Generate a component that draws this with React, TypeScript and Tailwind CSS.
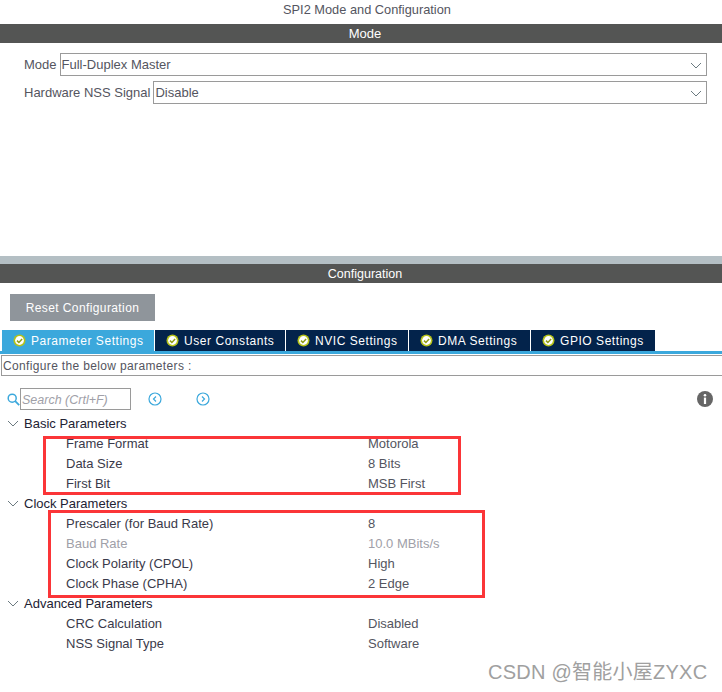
const font = "font-['Liberation_Sans',Arial,sans-serif]";

function Check() {
  return (
    <svg width="13" height="13" viewBox="0 0 13 13" className="shrink-0">
      <circle cx="6.5" cy="6.5" r="6" fill="#b5c21a" />
      <circle cx="6.5" cy="6.5" r="4.4" fill="#ffffff" />
      <path d="M4 6.6l1.9 1.9 3.2-3.4" fill="none" stroke="#8f9c10" strokeWidth="1.5" />
    </svg>
  );
}

function Chevron({ className }: { className: string }) {
  return (
    <svg width="12" height="7" viewBox="0 0 12 7" className={className}>
      <path d="M1 1l5 5 5-5" fill="none" stroke="#6b7a80" strokeWidth="1" />
    </svg>
  );
}

function SelectBox({ value }: { value: string }) {
  return (
    <div className="flex-1 h-[23px] border border-[#9a9a9a] flex items-center justify-between pl-[1px] pr-[4px] text-[#545560]">
      <span>{value}</span>
      <Chevron className="mt-[1px]" />
    </div>
  );
}

function Tab({ label, active, width }: { label: string; active?: boolean; width: string }) {
  return (
    <div
      className={`${width} h-[21px] flex items-center gap-[5px] pl-[11px] text-[12px] tracking-[0.55px] whitespace-nowrap text-white ${
        active ? "bg-[#3ba8dc]" : "bg-[#03234b]"
      }`}
    >
      <Check />
      <span>{label}</span>
    </div>
  );
}

function Group({ title }: { title: string }) {
  return (
    <div className="h-5 flex items-center pl-[7px] text-[#222233]">
      <Chevron className="mr-[5px]" />
      <span>{title}</span>
    </div>
  );
}

function Param({ name, value, off }: { name: string; value: string; off?: boolean }) {
  return (
    <div className={`h-5 flex items-center pl-[66px] ${off ? "text-[#a0a0a8]" : "text-[#3a3a4a]"}`}>
      <span className="w-[302px]">{name}</span>
      <span className={off ? "" : "text-[#545560]"}>{value}</span>
    </div>
  );
}

export default function App() {
  return (
    <div className={`${font} relative w-[722px] h-[692px] overflow-hidden bg-white text-[13px] leading-none`}>
      <div className="h-[24px] pb-[4px] pl-[12px] flex items-center justify-center text-[#545560] text-[12.8px]">SPI2 Mode and Configuration</div>
      <div className="h-[19px] pl-[8px] bg-[#545554] text-white text-[13px] flex items-center justify-center">Mode</div>

      <div className="pt-[10px] pl-[24px] pr-[15px] flex flex-col gap-[5px] h-[213px] text-[#545560]">
        <div className="flex items-center gap-[3px]">
          <span>Mode</span>
          <SelectBox value="Full-Duplex Master" />
        </div>
        <div className="flex items-center gap-[3px]">
          <span>Hardware NSS Signal</span>
          <SelectBox value="Disable" />
        </div>
      </div>

      <div className="h-[8px] bg-[#b4bfc4]" />
      <div className="h-[19px] pl-[8px] pt-[1px] bg-[#545554] text-white text-[12.5px] flex items-center justify-center">Configuration</div>

      <div className="pt-[11px] pl-[10px]">
        <div className="w-[145px] h-[27px] bg-[#8f959b] text-white text-[12px] flex items-center justify-center tracking-[0.4px]">
          Reset Configuration
        </div>
      </div>

      <div className="mt-[9px] pl-[2px] flex gap-[1px]">
        <Tab label="Parameter Settings" active width="w-[152px]" />
        <Tab label="User Constants" width="w-[130px]" />
        <Tab label="NVIC Settings" width="w-[122px]" />
        <Tab label="DMA Settings" width="w-[121px]" />
        <Tab label="GPIO Settings" width="w-[124px]" />
      </div>
      <div className="h-[3px] bg-[#3ba8dc]" />
      <div className="ml-[1px] mt-[1px] h-[21px] border border-r-0 border-[#9a9a9a] flex items-center pl-[1px] text-[12px] text-[#545560] tracking-[0.35px]">
        Configure the below parameters :
      </div>

      <div className="mt-[12px] h-[22px] flex items-center pl-[7px] pr-[9px]">
        <svg width="13" height="13" viewBox="0 0 13 13" className="shrink-0">
          <circle cx="5.2" cy="5.2" r="4" fill="none" stroke="#3ba8dc" strokeWidth="1.5" />
          <path d="M8.2 8.2l4 4" stroke="#3ba8dc" strokeWidth="1.8" />
        </svg>
        <div className="w-[111px] h-[22px] border border-[#9a9a9a] flex items-center pl-[1px] pt-[2px] italic text-[12.5px] text-[#a0a0a8]">
          Search (Crtl+F)
        </div>
        <svg width="14" height="14" viewBox="0 0 14 14" className="ml-[17px] shrink-0">
          <circle cx="7" cy="7" r="6" fill="none" stroke="#3ba8dc" strokeWidth="1.2" />
          <path d="M8 4.5L5.5 7 8 9.5" fill="none" stroke="#3ba8dc" strokeWidth="1.2" />
        </svg>
        <svg width="14" height="14" viewBox="0 0 14 14" className="ml-[34px] shrink-0">
          <circle cx="7" cy="7" r="6" fill="none" stroke="#3ba8dc" strokeWidth="1.2" />
          <path d="M6 4.5L8.5 7 6 9.5" fill="none" stroke="#3ba8dc" strokeWidth="1.2" />
        </svg>
        <svg width="16" height="16" viewBox="0 0 16 16" className="ml-auto shrink-0">
          <circle cx="8" cy="8" r="8" fill="#666666" />
          <rect x="6.9" y="6.6" width="2.2" height="6.4" fill="#ffffff" />
          <circle cx="8" cy="4.2" r="1.3" fill="#ffffff" />
        </svg>
      </div>

      <div className="mt-[3px]">
        <Group title="Basic Parameters" />
        <Param name="Frame Format" value="Motorola" />
        <Param name="Data Size" value="8 Bits" />
        <Param name="First Bit" value="MSB First" />
        <Group title="Clock Parameters" />
        <Param name="Prescaler (for Baud Rate)" value="8" />
        <Param name="Baud Rate" value="10.0 MBits/s" off />
        <Param name="Clock Polarity (CPOL)" value="High" />
        <Param name="Clock Phase (CPHA)" value="2 Edge" />
        <Group title="Advanced Parameters" />
        <Param name="CRC Calculation" value="Disabled" />
        <Param name="NSS Signal Type" value="Software" />
      </div>

      {/* hand-drawn red annotation boxes sit on top of the table */}
      <div className="absolute left-[43px] top-[436px] w-[418px] h-[59px] border-[3px] border-[#fb3538]" />
      <div className="absolute left-[48px] top-[510px] w-[437px] h-[88px] border-[3px] border-[#fb3538]" />
      <div className="absolute left-[488px] top-[662px] text-[20px] tracking-[0.25px] text-[#a0a0a0] font-['Liberation_Sans','Noto_Sans_CJK_SC',sans-serif]">
        CSDN @智能小屋ZYXC
      </div>
    </div>
  );
}
